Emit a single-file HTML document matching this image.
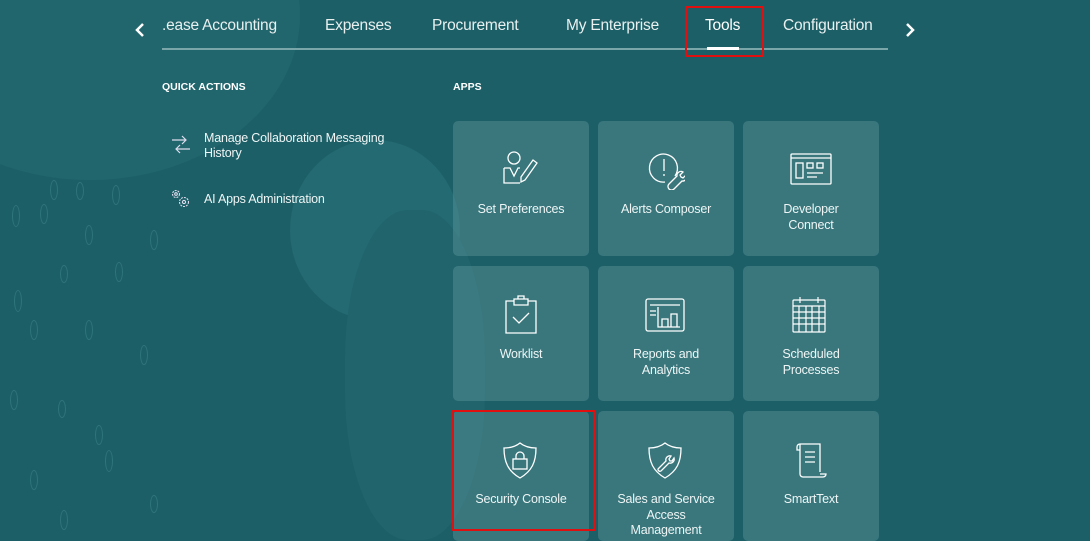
<!DOCTYPE html>
<html><head><style>
*{margin:0;padding:0;box-sizing:border-box}
html,body{width:1090px;height:541px;overflow:hidden}
body{position:relative;font-family:"Segoe UI","Liberation Sans",sans-serif;color:#fff;background:#1d5f67}
.bg{position:absolute;border-radius:50%}
.nav{position:absolute;top:17px;font-size:15.5px;color:#e8f0f0;white-space:nowrap;letter-spacing:-0.2px}
.hd{position:absolute;font-size:10.5px;font-weight:bold;top:81px}
.tile{position:absolute;width:136px;height:135px;background:rgba(100,155,160,0.4);border-radius:5px;text-align:center;font-size:12.5px;line-height:15.5px;color:#eef5f5;letter-spacing:-0.2px}
.tile svg{position:absolute;left:47px;top:29px}
.tile .l{position:absolute;left:0;right:0;top:81px}
.red{position:absolute;border:2px solid #e01010}
.qa{position:absolute;font-size:12.5px;line-height:15px;color:#eef5f5;letter-spacing:-0.2px}
.o{position:absolute;border:1.5px solid rgba(60,130,135,0.6);border-radius:50%}
</style></head><body>
<div class="bg" style="left:-120px;top:-150px;width:420px;height:330px;background:#22666d"></div>
<div class="bg" style="left:290px;top:140px;width:170px;height:180px;background:#236a72"></div>
<div class="bg" style="left:345px;top:210px;width:140px;height:330px;border-radius:45%;background:#21646c"></div>
<div class="o" style="left:50px;top:180px;width:8px;height:20px"></div>
<div class="o" style="left:76px;top:182px;width:8px;height:18px"></div>
<div class="o" style="left:112px;top:185px;width:8px;height:20px"></div>
<div class="o" style="left:12px;top:205px;width:8px;height:22px"></div>
<div class="o" style="left:40px;top:204px;width:8px;height:20px"></div>
<div class="o" style="left:85px;top:225px;width:8px;height:20px"></div>
<div class="o" style="left:150px;top:230px;width:8px;height:20px"></div>
<div class="o" style="left:60px;top:265px;width:8px;height:18px"></div>
<div class="o" style="left:115px;top:262px;width:8px;height:20px"></div>
<div class="o" style="left:14px;top:290px;width:8px;height:22px"></div>
<div class="o" style="left:30px;top:320px;width:8px;height:20px"></div>
<div class="o" style="left:85px;top:320px;width:8px;height:20px"></div>
<div class="o" style="left:140px;top:345px;width:8px;height:20px"></div>
<div class="o" style="left:10px;top:390px;width:8px;height:20px"></div>
<div class="o" style="left:58px;top:400px;width:8px;height:18px"></div>
<div class="o" style="left:95px;top:425px;width:8px;height:20px"></div>
<div class="o" style="left:30px;top:470px;width:8px;height:20px"></div>
<div class="o" style="left:105px;top:450px;width:8px;height:22px"></div>
<div class="o" style="left:150px;top:495px;width:8px;height:18px"></div>
<div class="o" style="left:60px;top:510px;width:8px;height:20px"></div>

<svg style="position:absolute;left:134px;top:22px" width="12" height="16"><path d="M9 2L3 8l6 6" stroke="#fff" stroke-width="2.5" fill="none"/></svg>
<svg style="position:absolute;left:904px;top:22px" width="12" height="16"><path d="M3 2l6 6-6 6" stroke="#fff" stroke-width="2.5" fill="none"/></svg>
<div class="nav" style="left:162px">.ease Accounting</div>
<div class="nav" style="left:325px">Expenses</div>
<div class="nav" style="left:432px">Procurement</div>
<div class="nav" style="left:566px">My Enterprise</div>
<div class="nav" style="left:705px;color:#fff">Tools</div>
<div class="nav" style="left:783px">Configuration</div>
<div style="position:absolute;left:162px;top:48px;width:726px;height:2px;background:#7aa6aa"></div>
<div style="position:absolute;left:707px;top:47px;width:32px;height:3px;background:#fff"></div>
<div class="red" style="left:685px;top:6px;width:79px;height:51px"></div>

<div class="hd" style="left:162px">QUICK ACTIONS</div>
<div class="hd" style="left:453px">APPS</div>

<svg style="position:absolute;left:170px;top:134px" width="22" height="22" fill="none" stroke="#dde" stroke-width="1.2"><path d="M2 6h14M12 2l4 4-4 4M20 15H6M10 11l-4 4 4 4"/></svg>
<div class="qa" style="left:204px;top:131px">Manage Collaboration Messaging<br>History</div>
<svg style="position:absolute;left:169px;top:188px" width="24" height="22" fill="none" stroke="#dde" stroke-width="1.1"><circle cx="7" cy="6" r="3.5" stroke-dasharray="2 1"/><circle cx="7" cy="6" r="1.3"/><circle cx="15" cy="14" r="4.5" stroke-dasharray="2 1"/><circle cx="15" cy="14" r="1.6"/></svg>
<div class="qa" style="left:204px;top:192px">AI Apps Administration</div>

<div class="tile" style="left:453px;top:121px"><svg width="40" height="40" fill="none" stroke="#fff" stroke-width="1.3"><circle cx="14" cy="8" r="6"/><path d="M4 18h6l4 8 4-8h2M4 18v15h16"/><path d="M33 10l4 3-12 17-4 2 0-5z"/></svg><div class="l">Set Preferences</div></div>
<div class="tile" style="left:598px;top:121px"><svg width="40" height="40" fill="none" stroke="#fff" stroke-width="1.3"><path d="M30 26A14 14 0 1 0 20 32"/><path d="M19 9v12M19 24v2"/><path d="M24 34l8-8a4 4 0 0 1 6-4l-3 3 1 2 2 1 3-3a4 4 0 0 1-4 6l-8 8a2 2 0 0 1-5-5z"/></svg><div class="l">Alerts Composer</div></div>
<div class="tile" style="left:743px;top:121px"><svg width="42" height="40" fill="none" stroke="#fff" stroke-width="1.3"><rect x="1" y="4" width="40" height="30" rx="1"/><path d="M1 8h40"/><rect x="6" y="13" width="7" height="15"/><rect x="17" y="13" width="6" height="5"/><rect x="27" y="13" width="6" height="5"/><path d="M17 23h16M17 27h10"/></svg><div class="l">Developer<br>Connect</div></div>

<div class="tile" style="left:453px;top:266px"><svg width="40" height="40" fill="none" stroke="#fff" stroke-width="1.3"><path d="M14 6h-8v32h30V6h-8"/><path d="M14 4h14v6H14zM18 4v-3h6v3"/><path d="M13 22l6 6 10-10"/></svg><div class="l">Worklist</div></div>
<div class="tile" style="left:598px;top:266px"><svg width="42" height="40" fill="none" stroke="#fff" stroke-width="1.3"><rect x="1" y="4" width="38" height="32" rx="2"/><path d="M5 10h30M5 16h6M5 20h6M13 12v20h22M17 24h6v8h-6zM26 19h6v13h-6z"/></svg><div class="l">Reports and<br>Analytics</div></div>
<div class="tile" style="left:743px;top:266px"><svg width="40" height="40" fill="none" stroke="#fff" stroke-width="1.2"><rect x="3" y="5" width="32" height="32" rx="1"/><path d="M3 11h32M3 17h32M3 23h32M3 29h32M9 11v26M16 11v26M22 11v26M29 11v26"/><path d="M10 2v6M28 2v6"/></svg><div class="l">Scheduled<br>Processes</div></div>

<div class="tile" style="left:453px;top:411px;height:130px"><svg width="40" height="40" fill="none" stroke="#fff" stroke-width="1.3"><path d="M20 3C15 7 9 8 4 8c0 14 4 23 16 30 12-7 16-16 16-30-5 0-11-1-16-5z"/><rect x="13" y="19" width="14" height="10"/><path d="M16 19v-3a4 4 0 0 1 8 0v3"/></svg><div class="l">Security Console</div></div>
<div class="tile" style="left:598px;top:411px;height:130px"><svg width="40" height="40" fill="none" stroke="#fff" stroke-width="1.3"><path d="M20 3C15 7 9 8 4 8c0 14 4 23 16 30 12-7 16-16 16-30-5 0-11-1-16-5z"/><path d="M13 29l8-8a4 4 0 0 1 5-5l-2 3 1 2 2 0 2-3a4 4 0 0 1-5 5l-8 8a2 2 0 0 1-3-2z"/></svg><div class="l">Sales and Service<br>Access<br>Management</div></div>
<div class="tile" style="left:743px;top:411px;height:130px"><svg width="40" height="40" fill="none" stroke="#fff" stroke-width="1.3"><path d="M10 4h20v28M10 4a3 3 0 0 0-3 3v3h3M10 4v30a3 3 0 0 0 3 3h20a3 3 0 0 0 3-3h-6"/><path d="M15 12h10M15 17h10M15 22h10"/></svg><div class="l">SmartText</div></div>
<div class="red" style="left:452px;top:410px;width:143px;height:121px"></div>
</body></html>
